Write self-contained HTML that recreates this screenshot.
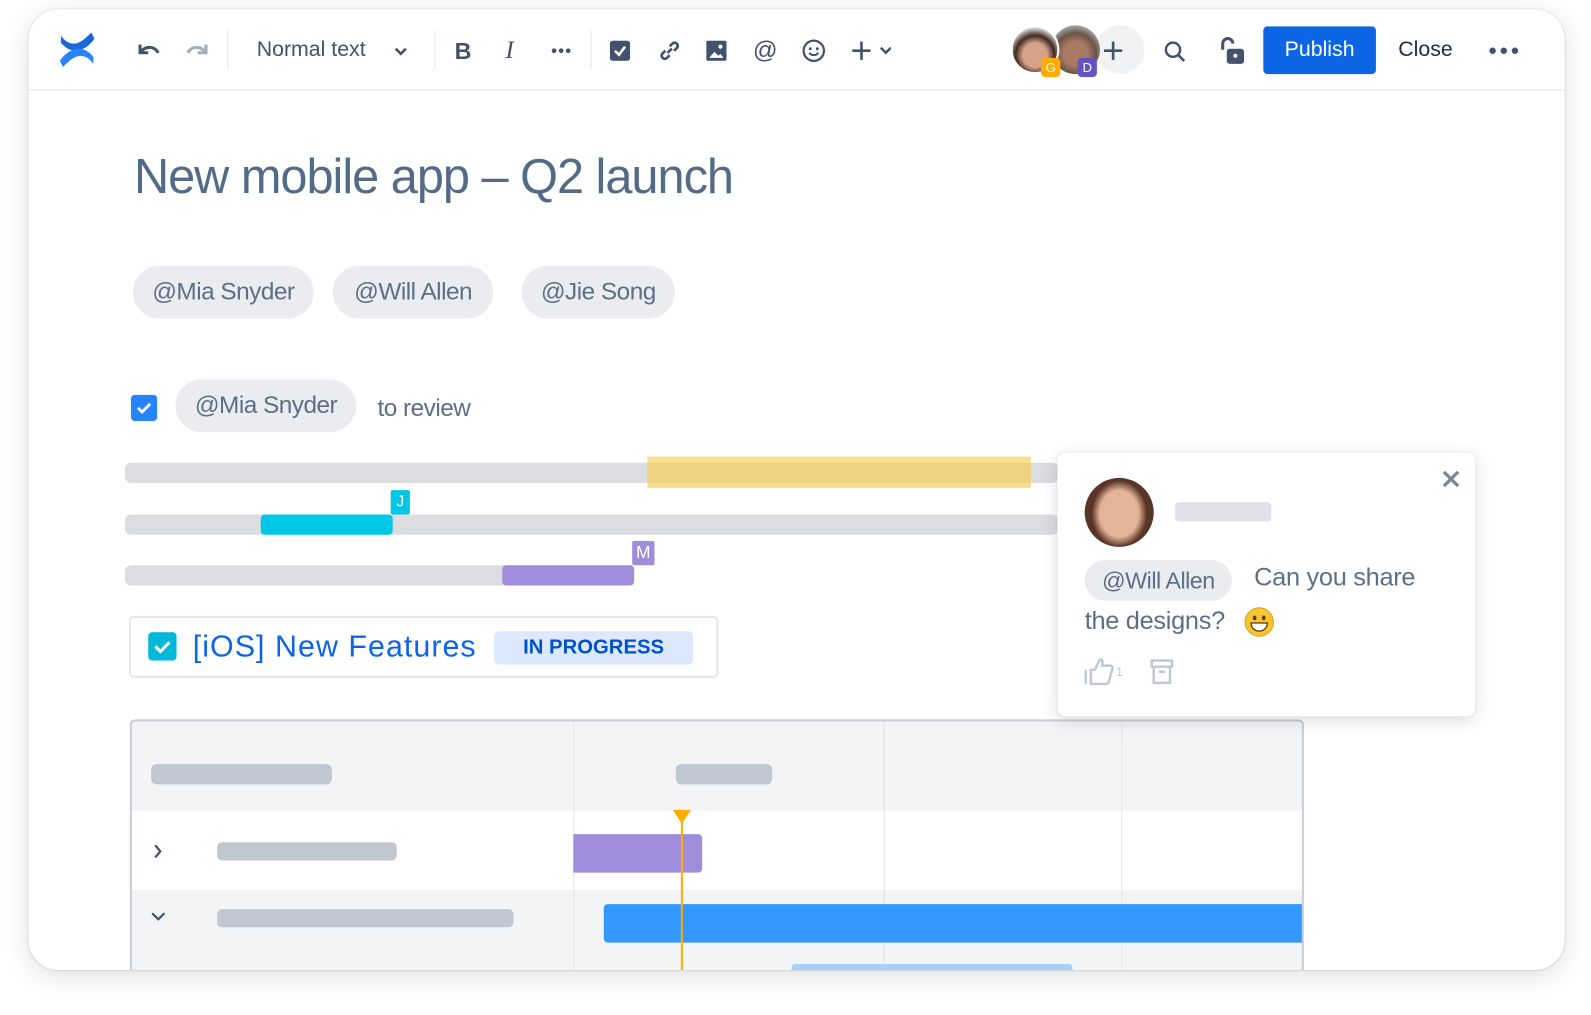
<!DOCTYPE html>
<html><head><meta charset="utf-8"><style>
*{margin:0;padding:0;box-sizing:border-box}
html,body{width:1591px;height:1015px;overflow:hidden;background:#fff;font-family:"Liberation Sans",sans-serif}
#w{position:absolute;left:0;top:0;width:1568px;height:1000px;transform:scale(1.0147);transform-origin:0 0}
.a{position:absolute}
.card{left:28px;top:9px;width:1514px;height:947px;border-radius:30px;background:#fff;box-shadow:0 6px 26px rgba(0,0,0,.12),0 0 2px rgba(0,0,0,.15);overflow:hidden}
.tb{left:0;top:0;width:1514px;height:80px;border-bottom:1px solid #e1e3e8}
.ic{color:#42526e;font-size:22px}
.sep{width:1px;height:38px;background:#e3e5ea;top:21px}
.chip{background:#ebecf0;border-radius:26px;color:#5c6f87;font-size:24px;height:52px;line-height:52px;padding:0 19px;letter-spacing:-.5px}
.bar{background:#dcdde1;border-radius:6px;height:20px}
.g{background:#c1c7d0;border-radius:5px;height:20px}
</style></head><body><div id="w">
<div class="a card">
 <div class="a tb">
  <svg class="a" style="left:29px;top:22px" width="38" height="36" viewBox="0 0 38 36"><path d="M3 4c6 9 14 10 21 5 4-3 7-6 9-8l3 6c-3 5-8 9-13 11-8 3-15-1-20-7z" fill="#1868db"/><path d="M35 32c-6-9-14-10-21-5-4 3-7 6-9 8l-3-6c3-5 8-9 13-11 8-3 15 1 20 7z" fill="#2684ff"/></svg>
  <svg class="a" style="left:106px;top:31px" width="26" height="20" viewBox="0 0 26 20"><path d="M4 4v8h8M4 12c4-6 13-8 18 0" fill="none" stroke="#42526e" stroke-width="3"/></svg>
  <svg class="a" style="left:153px;top:31px" width="26" height="20" viewBox="0 0 26 20"><path d="M22 4v8h-8M22 12c-4-6-13-8-18 0" fill="none" stroke="#a5adba" stroke-width="3"/></svg>
  <div class="a sep" style="left:196px"></div>
  <div class="a" style="left:225px;top:28px;font-size:21px;color:#42526e">Normal text</div>
  <svg class="a" style="left:360px;top:37px" width="14" height="10"><path d="M2 2l5 5 5-5" fill="none" stroke="#42526e" stroke-width="2.5"/></svg>
  <div class="a sep" style="left:400px"></div>
  <div class="a ic" style="left:420px;top:28px;font-weight:bold;font-size:23px">B</div>
  <div class="a ic" style="left:470px;top:27px;font-style:italic;font-size:25px;font-family:'Liberation Serif',serif">I</div>
  <svg class="a" style="left:515px;top:38px" width="20" height="6"><circle cx="3" cy="3" r="2.3" fill="#42526e"/><circle cx="10" cy="3" r="2.3" fill="#42526e"/><circle cx="17" cy="3" r="2.3" fill="#42526e"/></svg>
  <div class="a sep" style="left:554px"></div>
  <svg class="a" style="left:573px;top:31px" width="20" height="20"><rect width="20" height="20" rx="3" fill="#42526e"/><path d="M5 10l4 4 6-8" fill="none" stroke="#fff" stroke-width="2.5"/></svg>
  <svg class="a" style="left:619px;top:28px" width="26" height="26" viewBox="0 0 24 24"><path d="M10 14l4-4M8 12l-3 3a3 3 0 004 4l3-3M16 12l3-3a3 3 0 00-4-4l-3 3" fill="none" stroke="#42526e" stroke-width="2.4"/></svg>
  <svg class="a" style="left:668px;top:31px" width="20" height="20"><rect width="20" height="20" rx="2" fill="#42526e"/><path d="M3 17l5-6 4 4 2-2 3 4z" fill="#fff"/><circle cx="14" cy="6" r="2" fill="#fff"/></svg>
  <div class="a ic" style="left:714px;top:27px;font-size:24px">@</div>
  <svg class="a" style="left:762px;top:29px" width="24" height="24"><circle cx="12" cy="12" r="10" fill="none" stroke="#42526e" stroke-width="2.2"/><circle cx="8.5" cy="10" r="1.4" fill="#42526e"/><circle cx="15.5" cy="10" r="1.4" fill="#42526e"/><path d="M7.5 14c2 3 7 3 9 0" fill="none" stroke="#42526e" stroke-width="2"/></svg>
  <svg class="a" style="left:810px;top:30px" width="40" height="22"><path d="M11 2v18M2 11h18" stroke="#42526e" stroke-width="2.6"/><path d="M30 8l5 5 5-5" fill="none" stroke="#42526e" stroke-width="2.4"/></svg>
  <div class="a" style="left:1052px;top:16px;width:48px;height:48px;border-radius:50%;background:#f1f2f4"></div>
  <svg class="a" style="left:1059px;top:31px" width="20" height="20"><path d="M10 1v18M1 10h18" stroke="#42526e" stroke-width="2.6"/></svg>
  <div class="a" style="left:1008px;top:16px;width:48px;height:48px;border-radius:50%;background:radial-gradient(circle at 50% 58%,#a87a62 0 32%,#6a5446 55%,#9a9a9a 72%)"></div>
  <div class="a" style="left:968px;top:16px;width:48px;height:48px;border-radius:50%;background:radial-gradient(circle at 50% 62%,#d7a28a 0 34%,#3f2a20 55%,#cfcfcf 75%);border:2px solid #fff"></div>
  <div class="a" style="left:998px;top:48px;width:19px;height:19px;border-radius:4px;background:#ffab00;color:#fff;font-size:13px;text-align:center;line-height:19px">G</div>
  <div class="a" style="left:1034px;top:48px;width:19px;height:19px;border-radius:4px;background:#6554c0;color:#fff;font-size:13px;text-align:center;line-height:19px">D</div>
  <svg class="a" style="left:1118px;top:30px" width="24" height="24"><circle cx="10" cy="10" r="7" fill="none" stroke="#42526e" stroke-width="2.4"/><path d="M15 15l6 6" stroke="#42526e" stroke-width="2.6"/></svg>
  <svg class="a" style="left:1172px;top:26px" width="28" height="30"><path d="M5 14V8a5 5 0 0110 0" fill="none" stroke="#42526e" stroke-width="3"/><rect x="9" y="13" width="17" height="15" rx="3" fill="#42526e"/><circle cx="17.5" cy="20" r="2" fill="#fff"/></svg>
  <div class="a" style="left:1217px;top:17px;width:111px;height:47px;border-radius:4px;background:#0c66e4;color:#fff;font-size:21px;text-align:center;line-height:46px">Publish</div>
  <div class="a" style="left:1350px;top:28px;font-size:21px;color:#172b4d">Close</div>
  <svg class="a" style="left:1439px;top:37px" width="30" height="8"><circle cx="4" cy="4" r="3.2" fill="#42526e"/><circle cx="15" cy="4" r="3.2" fill="#42526e"/><circle cx="26" cy="4" r="3.2" fill="#42526e"/></svg>
 </div>
 <div class="a" style="left:104px;top:138px;font-size:48px;color:#536b88;letter-spacing:-1px">New mobile app – Q2 launch</div>
 <div class="a chip" style="left:103px;top:253px">@Mia Snyder</div>
 <div class="a chip" style="left:300px;top:253px;padding:0 21px">@Will Allen</div>
 <div class="a chip" style="left:486px;top:253px">@Jie Song</div>
 <svg class="a" style="left:101px;top:380px" width="26" height="26"><rect width="26" height="26" rx="4" fill="#2684ff"/><path d="M7 13l4 4 8-8" fill="none" stroke="#fff" stroke-width="2.8"/></svg>
 <div class="a chip" style="left:145px;top:365px">@Mia Snyder</div>
 <div class="a" style="left:344px;top:380px;font-size:24px;color:#5c6f87;letter-spacing:-.5px">to review</div>
 <div class="a bar" style="left:95px;top:447px;width:920px"></div>
 <div class="a" style="left:610px;top:441px;width:378px;height:31px;background:rgba(246,204,80,.65)"></div>
 <div class="a bar" style="left:95px;top:498px;width:920px"></div>
 <div class="a" style="left:229px;top:498px;width:130px;height:20px;background:#00c7e6;border-radius:4px"></div>
 <div class="a" style="left:357px;top:474px;width:19px;height:24px;background:#00c7e6;color:#fff;font-size:15px;text-align:center;line-height:24px;border-radius:2px">J</div>
 <div class="a bar" style="left:95px;top:548px;width:500px"></div>
 <div class="a" style="left:467px;top:548px;width:130px;height:20px;background:#9f8ddc;border-radius:4px"></div>
 <div class="a" style="left:595px;top:524px;width:22px;height:24px;background:#9f8ddc;color:#fff;font-size:17px;text-align:center;line-height:24px;border-radius:2px">M</div>
 <div class="a" style="left:99px;top:598px;width:581px;height:61px;border:2px solid #e4e6ea;border-radius:5px"></div>
 <svg class="a" style="left:118px;top:614px" width="28" height="28"><rect width="28" height="28" rx="4" fill="#00b8d9"/><path d="M7 14l5 5 9-9" fill="none" stroke="#fff" stroke-width="3"/></svg>
 <div class="a" style="left:162px;top:612px;font-size:30px;color:#0c66e4;letter-spacing:1px">[iOS] New Features</div>
 <div class="a" style="left:459px;top:613px;width:196px;height:33px;background:#dbe8fd;border-radius:5px;color:#0052cc;font-size:20px;font-weight:bold;text-align:center;line-height:33px">IN PROGRESS</div>
 <div class="a" style="left:100px;top:700px;width:1157px;height:260px;border:2px solid #c9ced6;border-radius:5px;background:#f3f4f6;overflow:hidden">
  <div class="a" style="left:0;top:88px;width:1157px;height:78px;background:#fff"></div>
  <div class="a" style="left:435px;top:0;width:1px;height:260px;background:#e1e3e7"></div>
  <div class="a" style="left:741px;top:0;width:1px;height:260px;background:#e1e3e7"></div>
  <div class="a" style="left:975px;top:0;width:1px;height:260px;background:#e1e3e7"></div>
  <div class="a g" style="left:19px;top:42px;width:178px"></div>
  <div class="a g" style="left:536px;top:42px;width:95px"></div>
  <div class="a g" style="left:84px;top:119px;width:177px;height:18px"></div>
  <div class="a g" style="left:84px;top:185px;width:292px;height:18px"></div>
  <svg class="a" style="left:20px;top:119px" width="12" height="18"><path d="M3 3l5 6-5 6" fill="none" stroke="#42526e" stroke-width="2.2"/></svg>
  <svg class="a" style="left:18px;top:186px" width="16" height="14"><path d="M2 3l6 6 6-6" fill="none" stroke="#42526e" stroke-width="2.2"/></svg>
  <div class="a" style="left:435px;top:111px;width:127px;height:38px;background:#9f8ddc;border-radius:0 4px 4px 0"></div>
  <div class="a" style="left:465px;top:180px;width:700px;height:38px;background:#3399ff;border-radius:4px"></div>
  <div class="a" style="left:650px;top:239px;width:277px;height:20px;background:#a9d0fd;border-radius:4px"></div>
  <div class="a" style="left:541px;top:91px;width:2px;height:170px;background:#ffab00"></div>
  <svg class="a" style="left:533px;top:87px" width="18" height="14"><path d="M0 0h18L9 14z" fill="#ffab00"/></svg>
 </div>
</div>
<div class="a" style="left:1042px;top:446px;width:412px;height:260px;background:#fff;border-radius:8px;box-shadow:0 4px 18px rgba(0,0,0,.13),0 0 2px rgba(0,0,0,.1)">
 <svg class="a" style="left:378px;top:16px" width="20" height="20"><path d="M3 3l14 14M17 3L3 17" stroke="#7a869a" stroke-width="3.2"/></svg>
 <div class="a" style="left:27px;top:25px;width:68px;height:68px;border-radius:50%;background:radial-gradient(ellipse 40% 48% at 50% 52%,#e4b49a 0 70%,#5a3526 100%)"></div>
 <div class="a" style="left:116px;top:49px;width:95px;height:19px;background:#dfe1e6;border-radius:4px"></div>
 <div class="a chip" style="left:27px;top:106px;height:40px;line-height:40px;border-radius:20px;font-size:23px;padding:0 17px">@Will Allen</div>
 <div class="a" style="left:194px;top:109px;font-size:25px;color:#5c6f87;letter-spacing:-.3px">Can you share</div>
 <div class="a" style="left:27px;top:152px;font-size:25px;color:#5c6f87;letter-spacing:-.3px">the designs?</div>
 <svg class="a" style="left:184px;top:152px" width="30" height="30" viewBox="0 0 30 30"><circle cx="15" cy="15" r="14" fill="#f7c531" stroke="#e0a020"/><ellipse cx="10.5" cy="11" rx="1.8" ry="2.4" fill="#5a3a10"/><ellipse cx="19.5" cy="11" rx="1.8" ry="2.4" fill="#5a3a10"/><path d="M7 16h16c0 5-4 8-8 8s-8-3-8-8z" fill="#fff" stroke="#5a3a10" stroke-width="1.3"/></svg>
 <svg class="a" style="left:26px;top:202px" width="30" height="28"><path d="M2 12v14M7 12h4l5-10c3 0 3 3 2 6h8c2 0 3 2 2 4l-3 11c0 2-2 3-3 3H7z" fill="none" stroke="#c1c7d0" stroke-width="2.4"/></svg>
 <div class="a" style="left:58px;top:209px;font-size:12px;color:#c1c7d0">1</div>
 <svg class="a" style="left:91px;top:203px" width="24" height="26"><rect x="2" y="2" width="20" height="6" fill="none" stroke="#c1c7d0" stroke-width="2.4"/><path d="M4 8v16h16V8M9 13h6" fill="none" stroke="#c1c7d0" stroke-width="2.4"/></svg>
</div>
</div></body></html>
